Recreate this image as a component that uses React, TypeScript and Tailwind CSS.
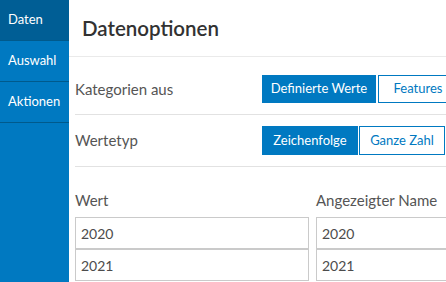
import React from "react";

const font = { fontFamily: "Lato, 'Open Sans', sans-serif" };

function SideItem({ label, active }: { label: string; active?: boolean }) {
  return (
    <div
      className={`h-[41px] flex items-center pl-[8px] text-[13px] text-white border-b border-[#005a8c] ${
        active ? "bg-[#005e95]" : "bg-[#0079c1]"
      }`}
    >
      {label}
    </div>
  );
}

function Seg({ label, active, w }: { label: string; active?: boolean; w: string }) {
  return (
    <div
      className={`${w} h-full shrink-0 flex items-center justify-center text-[13px] ${
        active ? "bg-[#0079c1] text-white" : "bg-white text-[#0079c1] border border-[#0079c1]"
      }`}
    >
      {label}
    </div>
  );
}

function Input({ value }: { value: string }) {
  return (
    <div className="h-[32px] border border-[#cacaca] flex items-center pl-[5px] text-[14px] text-[#4c4c4c] bg-white">
      {value}
    </div>
  );
}

export default function App() {
  return (
    <div className="w-[446px] h-[282px] flex overflow-hidden bg-white" style={font}>
      <div className="w-[69px] shrink-0 h-full bg-[#0079c1]">
        <SideItem label="Daten" active />
        <SideItem label="Auswahl" />
        <SideItem label="Aktionen" />
      </div>
      <div className="flex-1 min-w-0 overflow-hidden">
        <div className="h-[57px] border-b border-[#eaeaea] flex items-center pl-[13px] text-[20.5px] font-semibold text-[#323232]">
          Datenoptionen
        </div>
        <div className="pl-[6px]">
          <div className="flex items-center pt-[18px] pb-[11px] border-b border-[#e2e2e2]">
            <div className="w-[187px] shrink-0 text-[15px] text-[#555555]">Kategorien aus</div>
            <div className="flex h-[28px] gap-[2px]">
              <Seg label="Definierte Werte" active w="w-[114px]" />
              <Seg label="Features" w="w-[80px]" />
            </div>
          </div>
          <div className="flex items-center pt-[11px] pb-[11px] border-b border-[#e2e2e2]">
            <div className="w-[187px] shrink-0 text-[15px] text-[#555555]">Wertetyp</div>
            <div className="flex h-[29px] gap-[1px]">
              <Seg label="Zeichenfolge" active w="w-[96px]" />
              <Seg label="Ganze Zahl" w="w-[86px]" />
            </div>
          </div>
          <div className="flex gap-[7px] pt-[24px]">
            <div className="w-[234px] shrink-0">
              <div className="h-[18px] mb-[8px] text-[15px] text-[#555555] leading-[18px]">Wert</div>
              <Input value="2020" />
              <Input value="2021" />
            </div>
            <div className="w-[234px] shrink-0">
              <div className="h-[18px] mb-[8px] text-[15px] text-[#555555] leading-[18px]">Angezeigter Name</div>
              <Input value="2020" />
              <Input value="2021" />
            </div>
          </div>
        </div>
      </div>
    </div>
  );
}
